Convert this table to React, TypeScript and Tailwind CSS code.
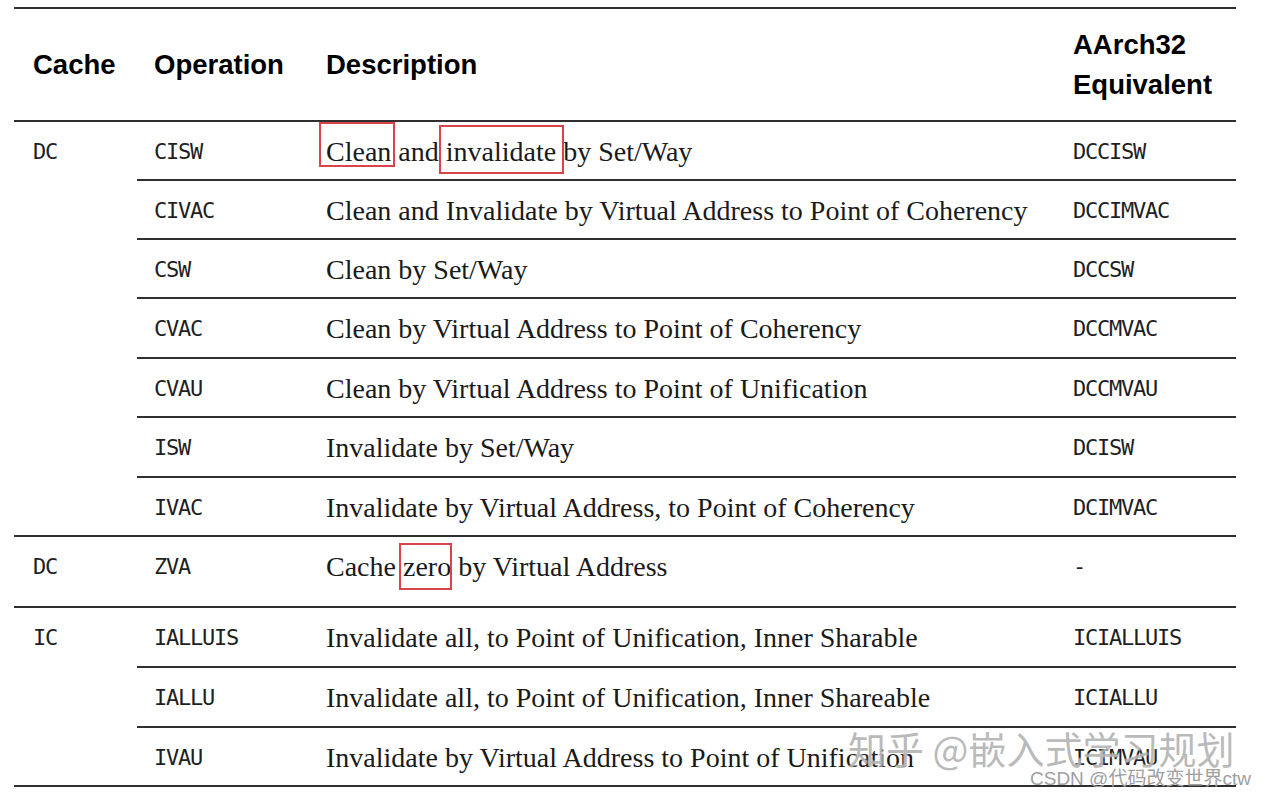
import type { ReactNode } from "react"

const mono = "font-['DejaVu_Sans_Mono','Liberation_Mono',monospace] text-[22px] tracking-[-1.24px] text-[#1f1f1f]"
const serif = "font-['Liberation_Serif','Times_New_Roman',serif] text-[28px] text-[#1a1a1a]"
const head = "font-['Liberation_Sans',Arial,sans-serif] text-[27.5px] font-bold text-black leading-[40px]"

type Row = {
  op: string
  desc: ReactNode
  a32: string
  h: string
}

function Boxed({ children, box }: { children: ReactNode; box: string }) {
  return (
    <span className="relative">
      {children}
      <span className={`pointer-events-none absolute border-2 border-[#d9434a] ${box}`} />
    </span>
  )
}

const groups: { cache: string; rows: Row[] }[] = [
  {
    cache: "DC",
    rows: [
      {
        op: "CISW",
        desc: (
          <>
            <Boxed box="-left-[7px] -right-[4px] -top-[14px] bottom-0">Clean</Boxed> and{" "}
            <Boxed box="-left-[7px] -right-[8px] -top-[11px] -bottom-[7px]">invalidate</Boxed> by Set/Way
          </>
        ),
        a32: "DCCISW",
        h: "h-[59px]",
      },
      { op: "CIVAC", desc: "Clean and Invalidate by Virtual Address to Point of Coherency", a32: "DCCIMVAC", h: "h-[59px]" },
      { op: "CSW", desc: "Clean by Set/Way", a32: "DCCSW", h: "h-[59px]" },
      { op: "CVAC", desc: "Clean by Virtual Address to Point of Coherency", a32: "DCCMVAC", h: "h-[60px]" },
      { op: "CVAU", desc: "Clean by Virtual Address to Point of Unification", a32: "DCCMVAU", h: "h-[59px]" },
      { op: "ISW", desc: "Invalidate by Set/Way", a32: "DCISW", h: "h-[60px]" },
      { op: "IVAC", desc: "Invalidate by Virtual Address, to Point of Coherency", a32: "DCIMVAC", h: "h-[59px]" },
    ],
  },
  {
    cache: "DC",
    rows: [
      {
        op: "ZVA",
        desc: (
          <>
            Cache <Boxed box="-left-[4px] -right-[1px] -top-[8px] -bottom-[8px]">zero</Boxed> by Virtual Address
          </>
        ),
        a32: "-",
        h: "h-[71px]",
      },
    ],
  },
  {
    cache: "IC",
    rows: [
      { op: "IALLUIS", desc: "Invalidate all, to Point of Unification, Inner Sharable", a32: "ICIALLUIS", h: "h-[60px]" },
      { op: "IALLU", desc: "Invalidate all, to Point of Unification, Inner Shareable", a32: "ICIALLU", h: "h-[60px]" },
      { op: "IVAU", desc: "Invalidate by Virtual Address to Point of Unification", a32: "ICIMVAU", h: "h-[59px]" },
    ],
  },
]

export default function App() {
  return (
    <div className="relative min-h-[800px] w-[1266px] bg-white">
      <div className="ml-[14px] w-[1222px] pt-[7px]">
        <div className="border-t-2 border-[#2f2f2f]">
          <div className="flex h-[113px] items-center border-b-2 border-[#2f2f2f]">
            <div className={`w-[123px] pl-[19px] ${head}`}>Cache</div>
            <div className={`w-[172px] pl-[17px] ${head}`}>Operation</div>
            <div className={`w-[747px] pl-[17px] ${head}`}>Description</div>
            <div className={`w-[180px] pl-[17px] ${head}`}>
              AArch32
              <br />
              Equivalent
            </div>
          </div>

          {groups.map((g, gi) => (
            <div key={gi} className="flex">
              <div className={`w-[123px] border-b-2 border-[#2f2f2f] pl-[19px] pt-[12px] leading-[36px] ${mono}`}>
                {g.cache}
              </div>
              <div className="flex-1">
                {g.rows.map((r) => (
                  <div key={r.op} className={`flex border-b-2 border-[#2f2f2f] pt-[12px] ${r.h}`}>
                    <div className={`w-[172px] pl-[17px] leading-[36px] ${mono}`}>{r.op}</div>
                    <div className={`w-[747px] pl-[17px] leading-[36px] whitespace-nowrap ${serif}`}>{r.desc}</div>
                    <div className={`w-[180px] pl-[17px] leading-[36px] ${mono}`}>{r.a32}</div>
                  </div>
                ))}
              </div>
            </div>
          ))}
        </div>
      </div>

      <div className="pointer-events-none absolute left-[848px] top-[724px] whitespace-nowrap font-['Noto_Sans_CJK_SC','Liberation_Sans',sans-serif] text-[38px] leading-[48px] text-[#8c8c8c]/60 [text-shadow:0_0_2px_#ffffff]">
        知乎 @嵌入式学习规划
      </div>
      <div className="pointer-events-none absolute left-[1030px] top-[768px] whitespace-nowrap font-['Liberation_Sans','Noto_Sans_CJK_SC',sans-serif] text-[19px] leading-[22px] text-[#a0a0a0]">
        CSDN @代码改变世界ctw
      </div>
    </div>
  )
}
